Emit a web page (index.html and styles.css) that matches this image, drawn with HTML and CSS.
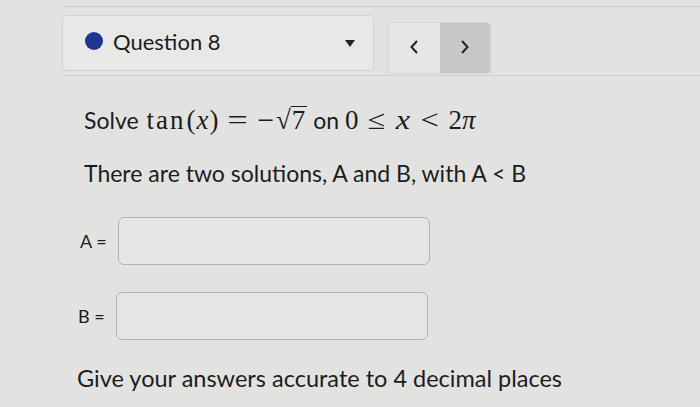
FILE: index.html
```html
<!DOCTYPE html>
<html>
<head>
<meta charset="utf-8">
<link rel="stylesheet" href="styles.css">
</head>
<body>
<div class="page">
  <div class="topline"></div>
  <div class="header">
    <div class="qbox">
      <span class="dot"></span>
      <span class="qtitle">Question 8</span>
      <span class="caret"></span>
    </div>
    <div class="nav">
      <span class="navbtn prev"><svg width="10" height="16" viewBox="0 0 10 16"><path d="M8 2 L2.5 8 L8 14" fill="none" stroke="#222" stroke-width="2"/></svg></span>
      <span class="navbtn next"><svg width="10" height="16" viewBox="0 0 10 16"><path d="M2 2 L7.5 8 L2 14" fill="none" stroke="#222" stroke-width="2"/></svg></span>
    </div>
  </div>
  <div class="headerline"></div>
  <div class="content">
    <p class="line solve">Solve <span class="math"><span class="fn">tan</span><span class="po">(</span><i>x</i><span class="po">)</span><span class="op eq">=</span><span class="op un">&minus;</span><span class="sqrt"><span class="rsign">&radic;</span><span class="rad">7</span></span></span> on <span class="math">0<span class="op le">&le;</span><i class="vx">x</i><span class="op lt">&lt;</span>2<i>&pi;</i></span></p>
    <p class="line two">There are two solutions, A and B, with A &lt; B</p>
    <div class="answer a">
      <span class="label">A =</span>
      <span class="input"></span>
    </div>
    <div class="answer b">
      <span class="label">B =</span>
      <span class="input"></span>
    </div>
    <p class="line give">Give your answers accurate to 4 decimal places</p>
  </div>
</div>
</body>
</html>
```
FILE: styles.css
```css
html, body {
  margin: 0;
  padding: 0;
}
body {
  width: 700px;
  height: 407px;
  overflow: hidden;
  background: #e2e3e1;
  color: #1c1c1e;
  font-family: "Lato", "Open Sans", sans-serif;
}
.page {
  padding-left: 62px;
}
.topline {
  height: 6px;
  border-bottom: 1px solid #cdcecc;
}
.header {
  display: flex;
  align-items: flex-start;
  margin-top: 8px;
}
.qbox {
  width: 312px;
  height: 56px;
  box-sizing: border-box;
  border: 1px solid #d2d3d1;
  border-radius: 4px;
  background: #e8e9e7;
  display: flex;
  align-items: center;
  padding-left: 22px;
  padding-right: 18px;
  padding-bottom: 5px;
}
.dot {
  width: 18px;
  height: 18px;
  border-radius: 50%;
  background: #1e3594;
  margin-right: 10px;
}
.qtitle {
  font-size: 22px;
  flex: 1;
  margin-top: 2px;
}
.caret {
  width: 0;
  height: 0;
  border-left: 5px solid transparent;
  border-right: 5px solid transparent;
  border-top: 7px solid #222;
  margin-top: 6px;
}
.nav {
  margin-left: 14px;
  margin-top: 7px;
  width: 103px;
  height: 52px;
  display: flex;
  border-radius: 4px;
  overflow: hidden;
  border: 1px solid #d6d7d5;
  box-sizing: border-box;
}
.navbtn {
  flex: 1;
  display: flex;
  align-items: center;
  justify-content: center;
  padding-bottom: 2px;
}
.prev {
  background: #e6e7e5;
}
.next {
  background: #c8c9c7;
}
.headerline {
  margin-top: 1px;
  border-top: 1px solid #cfd0ce;
}
.content {
  padding-left: 22px;
}
.line {
  margin: 0;
  font-size: 23px;
}
.solve {
  margin-top: 29px;
}
.math {
  font-family: "Liberation Serif", serif;
  font-size: 27px;
}
.math i {
  font-style: italic;
}
.fn {
  letter-spacing: 2px;
  margin-left: 2px;
}
.po {
  margin: 0 1px;
}
.op {
  display: inline-block;
}
.eq {
  transform: scaleX(1.35);
  margin: 0 12px 0 11px;
}
.un {
  transform: scaleX(1.1);
  margin-right: 3px;
}
.le {
  transform: scaleX(1.2);
  margin: 0 11px 0 11px;
}
.vx {
  display: inline-block;
  transform: scaleX(1.2);
  margin: 0 2px;
}
.lt {
  transform: scaleX(1.2);
  margin: 0 11px 0 11px;
}
.sqrt {
  white-space: nowrap;
}
.rad {
  display: inline-block;
  border-top: 1.5px solid #1c1c1e;
  line-height: 26px;
  padding: 0 2px 0 1px;
}
.two {
  margin-top: 23px;
}
.answer {
  display: flex;
  align-items: center;
}
.answer.a {
  margin-top: 30px;
  margin-left: -4px;
}
.answer.b {
  margin-top: 27px;
  margin-left: -6px;
}
.label {
  font-size: 18px;
  width: 38px;
}
.input {
  width: 312px;
  height: 48px;
  box-sizing: border-box;
  border: 1px solid #b3b4b2;
  border-radius: 6px;
  background: #e5e6e4;
}
.give {
  margin-top: 24px;
  margin-left: -7px;
  font-size: 23.5px;
}
```
